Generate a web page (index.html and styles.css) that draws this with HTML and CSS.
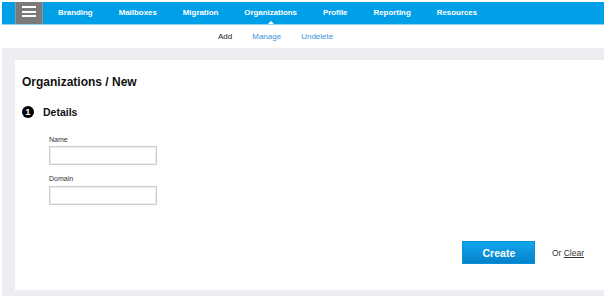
FILE: index.html
```html
<!DOCTYPE html>
<html lang="en">
<head>
<meta charset="utf-8">
<title>Organizations / New</title>
<link rel="stylesheet" href="styles.css">
</head>
<body>
<div class="app">
  <nav class="topnav">
    <button class="burger" aria-label="Menu">
      <span></span><span></span><span></span>
    </button>
    <ul class="menu">
      <li>Branding</li>
      <li>Mailboxes</li>
      <li>Migration</li>
      <li class="active">Organizations</li>
      <li>Profile</li>
      <li>Reporting</li>
      <li>Resources</li>
    </ul>
  </nav>
  <div class="subnav">
    <span class="sub current">Add</span>
    <a class="sub" href="#">Manage</a>
    <a class="sub" href="#">Undelete</a>
  </div>
  <main class="main">
    <section class="card">
      <h1 class="title">Organizations / New</h1>
      <div class="step">
        <span class="step-num">1</span>
        <span class="step-label">Details</span>
      </div>
      <form class="form">
        <label class="label">Name</label>
        <input class="field" type="text">
        <label class="label second">Domain</label>
        <input class="field" type="text">
        <div class="actions">
          <button type="button" class="create">Create</button>
          <span class="or">Or <a href="#" class="clear">Clear</a></span>
        </div>
      </form>
    </section>
  </main>
</div>
</body>
</html>
```

FILE: styles.css
```css
* { box-sizing: border-box; }

body {
  margin: 0;
  background: #ffffff;
  font-family: "Liberation Sans", Arial, sans-serif;
  color: #222;
}

.app {
  margin: 2px 2px 0 2px;
  width: 602px;
}

.topnav {
  display: flex;
  align-items: stretch;
  height: 23px;
  background: #00a0e8;
  border-bottom: 1px solid #8fd3f3;
}

.burger {
  margin-left: 13px;
  width: 28px;
  padding: 0;
  border: none;
  border-left: 1px solid #959595;
  border-right: 1px solid #959595;
  background: #7a7a7a;
  display: flex;
  flex-direction: column;
  align-items: center;
  justify-content: flex-start;
  padding-top: 4px;
  gap: 2.5px;
}

.burger span {
  display: block;
  width: 14px;
  height: 2px;
  background: #ffffff;
}

.menu {
  list-style: none;
  margin: 0 0 0 2px;
  padding: 0;
  display: flex;
  align-items: center;
}

.menu li {
  position: relative;
  padding: 0 13px;
  font-size: 7.9px;
  font-weight: bold;
  color: #ffffff;
  line-height: 22px;
  height: 22px;
}

.menu li.active::after {
  content: "";
  position: absolute;
  left: 50%;
  bottom: 0;
  margin-left: -3px;
  border-left: 3px solid transparent;
  border-right: 3px solid transparent;
  border-bottom: 3px solid #ffffff;
}

.subnav {
  height: 23px;
  display: flex;
  align-items: center;
  padding-left: 216px;
  gap: 20px;
  background: #ffffff;
}

.sub {
  font-size: 8px;
  text-decoration: none;
  color: #3d94dd;
}

.sub.current { color: #222; }

.main {
  background: #eceef2;
  padding: 12px 0 6px 13px;
}

.card {
  background: #ffffff;
  height: 230px;
  padding: 15px 0 0 7px;
}

.title {
  margin: 0;
  font-size: 12px;
  line-height: 14px;
  font-weight: bold;
  color: #111;
}

.step {
  margin-top: 17px;
  display: flex;
  align-items: center;
  gap: 9px;
  height: 12px;
}

.step-num {
  width: 12px;
  height: 12px;
  border-radius: 50%;
  background: #000;
  color: #fff;
  font-size: 9.5px;
  font-weight: bold;
  line-height: 12px;
  text-align: center;
}

.step-label {
  font-size: 10.5px;
  font-weight: bold;
  color: #111;
  line-height: 12px;
  margin-top: -1px;
}

.form {
  margin: 17px 0 0 27px;
}

.label {
  display: block;
  font-size: 7px;
  line-height: 9px;
  color: #333;
  margin-bottom: 2px;
}

.label.second {
  margin-top: 9px;
  margin-bottom: 3px;
}

.field {
  display: block;
  width: 108px;
  height: 19px;
  margin: 0;
  border: 1px solid #cfcfcf;
  box-shadow: inset 0 0 0 1px #ececec;
  background: #fff;
  padding: 0 4px;
}

.actions {
  margin-top: 36px;
  display: flex;
  justify-content: flex-end;
  align-items: center;
  padding-right: 20px;
  gap: 16.5px;
}

.create {
  width: 73px;
  height: 23px;
  padding: 0;
  border: 1px solid #0a8fd6;
  background: linear-gradient(#12a6ec, #0582cc);
  color: #fff;
  font-family: "Liberation Sans", Arial, sans-serif;
  font-size: 10.5px;
  font-weight: bold;
}

.or {
  font-size: 8.5px;
  color: #333;
}

.clear {
  color: #333;
  text-decoration: underline;
}
```
